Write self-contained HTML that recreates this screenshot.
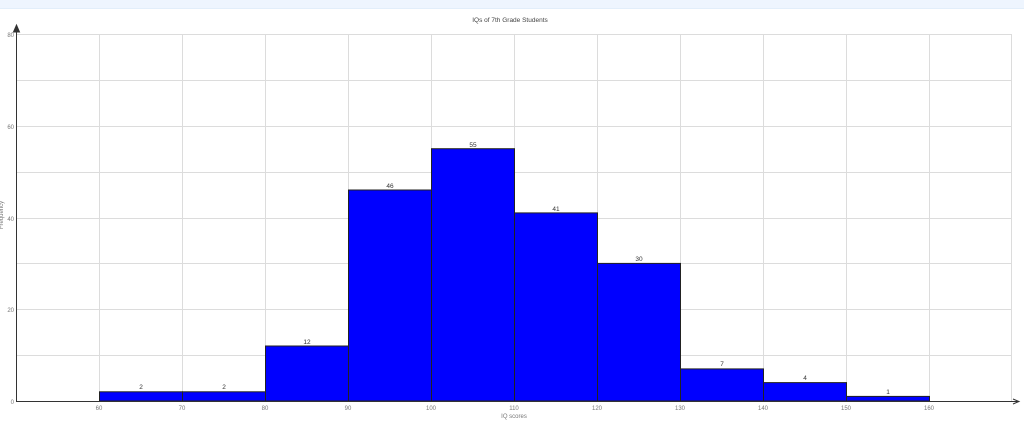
<!DOCTYPE html>
<html><head><meta charset="utf-8"><style>
html,body{margin:0;padding:0;background:#fff;width:1024px;height:426px;overflow:hidden}
svg{display:block;font-family:"Liberation Sans",sans-serif}
</style></head><body>
<svg width="1024" height="426" viewBox="0 0 1024 426">
<rect x="0" y="0" width="1024" height="8" fill="#eef5fe"/>
<line x1="0" y1="8.5" x2="1024" y2="8.5" stroke="#e2eefa"/>
<text x="510" y="22" font-size="6.5" fill="#444" text-anchor="middle">IQs of 7th Grade Students</text>
<g stroke="#dcdcdc" stroke-width="1">
<line x1="16" y1="34.5" x2="1011" y2="34.5"/>
<line x1="16" y1="80.5" x2="1011" y2="80.5"/>
<line x1="16" y1="126.5" x2="1011" y2="126.5"/>
<line x1="16" y1="172.5" x2="1011" y2="172.5"/>
<line x1="16" y1="218.5" x2="1011" y2="218.5"/>
<line x1="16" y1="263.5" x2="1011" y2="263.5"/>
<line x1="16" y1="309.5" x2="1011" y2="309.5"/>
<line x1="16" y1="355.5" x2="1011" y2="355.5"/>
<line x1="99.5" y1="34" x2="99.5" y2="401"/>
<line x1="182.5" y1="34" x2="182.5" y2="401"/>
<line x1="265.5" y1="34" x2="265.5" y2="401"/>
<line x1="348.5" y1="34" x2="348.5" y2="401"/>
<line x1="431.5" y1="34" x2="431.5" y2="401"/>
<line x1="514.5" y1="34" x2="514.5" y2="401"/>
<line x1="597.5" y1="34" x2="597.5" y2="401"/>
<line x1="680.5" y1="34" x2="680.5" y2="401"/>
<line x1="763.5" y1="34" x2="763.5" y2="401"/>
<line x1="846.5" y1="34" x2="846.5" y2="401"/>
<line x1="929.5" y1="34" x2="929.5" y2="401"/>
<line x1="1011.5" y1="34" x2="1011.5" y2="401"/>
</g>
<g fill="#0000ff" stroke="#222" stroke-width="1">
<rect x="99.5" y="391.8" width="83" height="9.2"/>
<rect x="182.5" y="391.8" width="83" height="9.2"/>
<rect x="265.5" y="346" width="83" height="55"/>
<rect x="348.5" y="190" width="83" height="211"/>
<rect x="431.5" y="148.7" width="83" height="252.3"/>
<rect x="514.5" y="212.9" width="83" height="188.1"/>
<rect x="597.5" y="263.4" width="83" height="137.6"/>
<rect x="680.5" y="368.9" width="83" height="32.1"/>
<rect x="763.5" y="382.6" width="83" height="18.4"/>
<rect x="846.5" y="396.4" width="83" height="4.6"/>
</g>
<g font-size="6.5" fill="#333" text-anchor="middle">
<text x="141" y="389">2</text><text x="224" y="389">2</text>
<text x="307" y="344">12</text><text x="390" y="188">46</text>
<text x="473" y="147">55</text><text x="556" y="211">41</text>
<text x="639" y="261">30</text><text x="722" y="366">7</text>
<text x="805" y="380">4</text><text x="888" y="394">1</text>
</g>
<g stroke="#333" stroke-width="1" fill="none">
<line x1="16.5" y1="28" x2="16.5" y2="401"/>
<line x1="16" y1="401.5" x2="1018" y2="401.5"/>
<path d="M13.5 32 L16.5 25 L19.5 32 Z" fill="#333"/>
<path d="M1013 399 L1019 401.5 L1013 404" />
</g>
<g font-size="6" fill="#777" text-anchor="end">
<text x="14" y="37">80</text><text x="14" y="129">60</text>
<text x="14" y="221">40</text><text x="14" y="312">20</text><text x="14" y="404">0</text>
</g>
<g font-size="6" fill="#777" text-anchor="middle">
<text x="99" y="410">60</text><text x="182" y="410">70</text><text x="265" y="410">80</text>
<text x="348" y="410">90</text><text x="431" y="410">100</text><text x="514" y="410">110</text>
<text x="597" y="410">120</text><text x="680" y="410">130</text><text x="763" y="410">140</text>
<text x="846" y="410">150</text><text x="929" y="410">160</text>
<text x="514" y="418">IQ scores</text>
</g>
<text transform="translate(3,215) rotate(-90)" font-size="6" fill="#777" text-anchor="middle">Frequency</text>
</svg>
</body></html>
